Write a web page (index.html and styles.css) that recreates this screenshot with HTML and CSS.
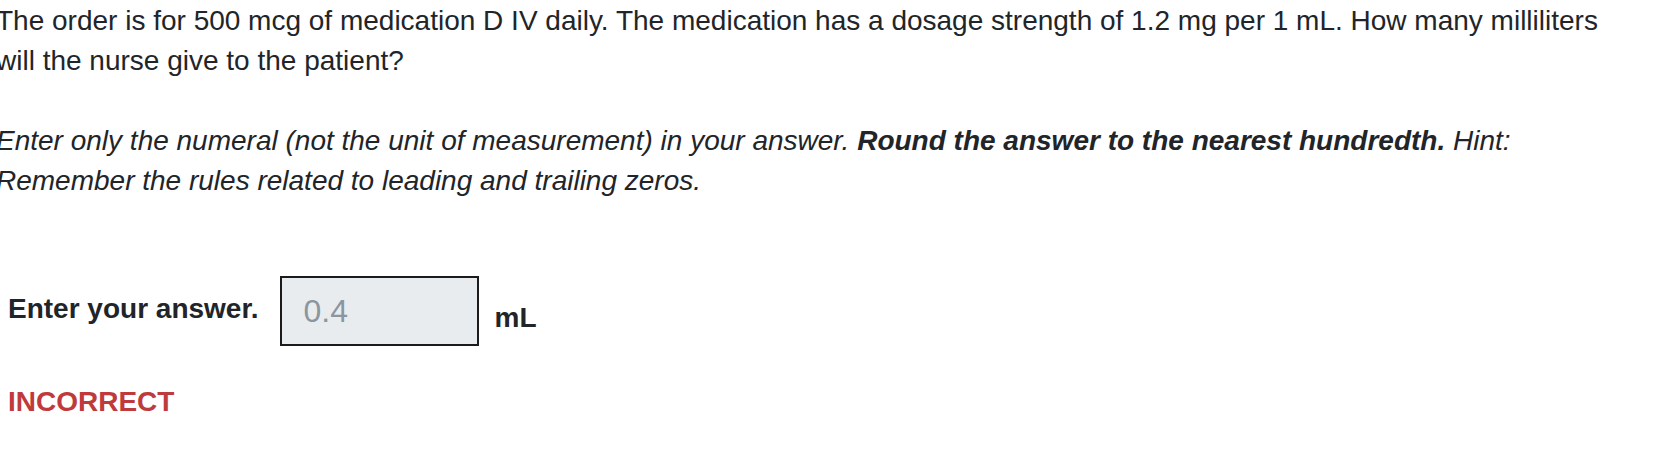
FILE: index.html
```html
<!DOCTYPE html>
<html>
<head>
<meta charset="utf-8">
<link rel="stylesheet" href="styles.css">
</head>
<body>
<div class="page">
  <div class="question">
    <p class="stem">The order is for 500 mcg of medication D IV daily. The medication has a dosage strength of 1.2 mg per 1 mL. How many milliliters will the nurse give to the patient?</p>
    <p class="instructions">Enter only the numeral (not the unit of measurement) in your answer. <strong>Round the answer to the nearest hundredth.</strong> Hint: Remember the rules related to leading and trailing zeros.</p>
  </div>
  <div class="answer-row">
    <label class="answer-label" for="ans">Enter your answer.</label>
    <input class="answer-input" id="ans" type="text" value="0.4" readonly>
    <span class="unit">mL</span>
  </div>
  <div class="feedback">INCORRECT</div>
</div>
</body>
</html>
```
FILE: styles.css
```css
html, body {
  margin: 0;
  padding: 0;
  background: #ffffff;
}
body {
  font-family: "Liberation Sans", Arial, Helvetica, sans-serif;
  color: #212529;
}
.page {
  padding: 0 0 0 8px;
}
.question {
  margin-left: -12px;
  width: 1648px;
  padding-top: 1px;
}
.stem,
.instructions {
  margin: 0 0 40px 0;
  font-size: 28px;
  line-height: 40px;
}
.instructions {
  font-style: italic;
}
.instructions strong {
  font-weight: bold;
}
.answer-row {
  display: flex;
  align-items: center;
  margin-top: 75px;
}
.answer-label {
  font-size: 28px;
  line-height: 32px;
  font-weight: bold;
  margin: 0 21px 4px 0;
}
.answer-input {
  box-sizing: border-box;
  width: 199px;
  height: 70px;
  border: 2px solid #1b1b1b;
  background: #e9ecef;
  color: #8b96a0;
  font-family: "Liberation Sans", Arial, Helvetica, sans-serif;
  font-size: 32px;
  padding: 0 0 0 22px;
  margin: 0 16px 0 0;
  outline: none;
}
.unit {
  font-size: 28px;
  line-height: 32px;
  font-weight: bold;
  margin-top: 13px;
}
.feedback {
  margin-top: 40px;
  font-size: 28px;
  line-height: 32px;
  font-weight: bold;
  color: #bf3a3d;
}
```
